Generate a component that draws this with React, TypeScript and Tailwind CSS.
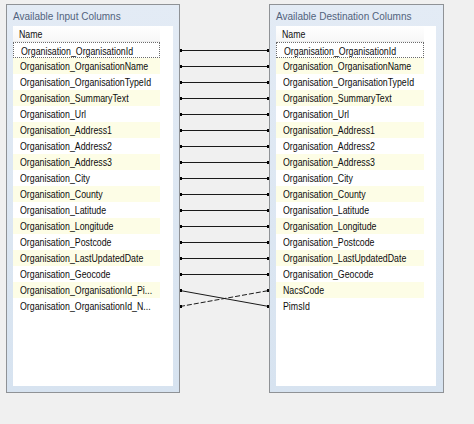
import React from "react";

const leftCols = [
  "Organisation_OrganisationId",
  "Organisation_OrganisationName",
  "Organisation_OrganisationTypeId",
  "Organisation_SummaryText",
  "Organisation_Url",
  "Organisation_Address1",
  "Organisation_Address2",
  "Organisation_Address3",
  "Organisation_City",
  "Organisation_County",
  "Organisation_Latitude",
  "Organisation_Longitude",
  "Organisation_Postcode",
  "Organisation_LastUpdatedDate",
  "Organisation_Geocode",
  "Organisation_OrganisationId_Pi...",
  "Organisation_OrganisationId_N...",
];

const rightCols = [
  "Organisation_OrganisationId",
  "Organisation_OrganisationName",
  "Organisation_OrganisationTypeId",
  "Organisation_SummaryText",
  "Organisation_Url",
  "Organisation_Address1",
  "Organisation_Address2",
  "Organisation_Address3",
  "Organisation_City",
  "Organisation_County",
  "Organisation_Latitude",
  "Organisation_Longitude",
  "Organisation_Postcode",
  "Organisation_LastUpdatedDate",
  "Organisation_Geocode",
  "NacsCode",
  "PimsId",
];

const font = { fontFamily: '"Liberation Sans", Arial, sans-serif' };

function Cell({ text }: { text: string }) {
  return (
    <span className="inline-block whitespace-nowrap origin-left scale-x-[0.8]">
      {text}
    </span>
  );
}

function Panel({
  title,
  cols,
  rowWidth,
  panelClass,
}: {
  title: string;
  cols: string[];
  rowWidth: string;
  panelClass: string;
}) {
  return (
    <div
      className={`h-[389px] shrink-0 border border-[#8f9296] bg-gradient-to-b from-[#e3ebf5] to-[#d7e3f0] flex flex-col pl-[6px] pb-[6px] ${panelClass}`}
      style={font}
    >
      <div className="h-[21px] shrink-0 pt-[6px] text-[10px] leading-[12px] text-[#52637d] whitespace-nowrap">
        {title}
      </div>
      <div className="flex-1 bg-white flex flex-col">
        <div
          className={`${rowWidth} h-[16px] shrink-0 bg-gradient-to-b from-white to-[#f7f7f7] border-b border-[#ececec] pl-[6px] text-[11px] leading-[16px] text-[#111] overflow-hidden`}
        >
          <Cell text="Name" />
        </div>
        {cols.map((c, i) => (
          <div
            key={c + i}
            className={`${rowWidth} h-[16px] shrink-0 pl-[7px] text-[11px] leading-[16px] text-[#0d0d0d] whitespace-nowrap overflow-hidden ${
              i === 0
                ? "bg-white border border-dotted border-[#6b6b6b] pl-[6px] leading-[14px]"
                : i % 2 === 1
                ? "bg-[#fdfde6]"
                : "bg-white"
            }`}
          >
            <Cell text={c} />
          </div>
        ))}
      </div>
    </div>
  );
}

function Lines() {
  const rowY = (i: number) => 46 + 16 * i + 0.5;
  const straight = Array.from({ length: 15 }, (_, i) => i);
  return (
    <svg width="89" height="389" className="shrink-0 block">
      {straight.map((i) => (
        <line key={i} x1="0" y1={rowY(i)} x2="89" y2={rowY(i)} stroke="#1a1a1a" strokeWidth="1" />
      ))}
      <line x1="0" y1={rowY(15)} x2="89" y2={rowY(16)} stroke="#1a1a1a" strokeWidth="1" />
      <line x1="0" y1={rowY(16)} x2="89" y2={rowY(15)} stroke="#1a1a1a" strokeWidth="1" strokeDasharray="5 2" />
      {Array.from({ length: 17 }, (_, i) => i).map((i) => (
        <g key={"e" + i}>
          <rect x="0" y={rowY(i) - 1.5} width="2" height="3" fill="#000" />
          <rect x="87" y={rowY(i) - 1.5} width="2" height="3" fill="#000" />
        </g>
      ))}
    </svg>
  );
}

export default function App() {
  return (
    <div className="w-[474px] h-[424px] bg-[#f0f0f0] overflow-hidden">
      <div className="flex pl-[6px] pt-[4px]">
        <Panel
          title="Available Input Columns"
          cols={leftCols}
          rowWidth="w-[147px]"
          panelClass="w-[174px] pr-[6px]"
        />
        <Lines />
        <Panel
          title="Available Destination Columns"
          cols={rightCols}
          rowWidth="w-[148px]"
          panelClass="w-[175px] pr-[7px]"
        />
      </div>
    </div>
  );
}
